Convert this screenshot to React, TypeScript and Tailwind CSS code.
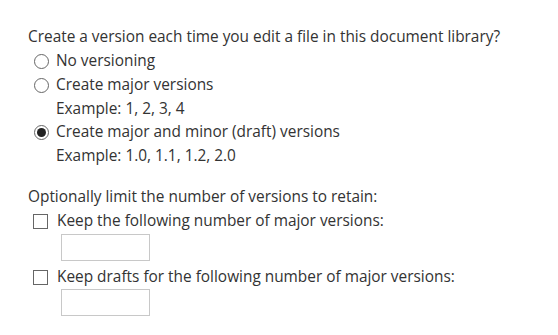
import React from "react";

function Radio({ checked }: { checked?: boolean }) {
  return (
    <span className="flex h-[15px] w-[15px] shrink-0 items-center justify-center rounded-full border border-[#666]">
      {checked && <span className="h-[9px] w-[9px] rounded-full bg-[#222]" />}
    </span>
  );
}

function Check() {
  return <span className="h-[15px] w-[15px] shrink-0 border border-[#666] bg-white" />;
}

export default function App() {
  return (
    <div className="h-[335px] w-[558px] bg-white pl-[28px] pt-[25px] text-[15.4px] text-[#333]" style={{ fontFamily: '"Open Sans", "Noto Sans", sans-serif' }}>
      <div className="h-6 leading-6">Create a version each time you edit a file in this document library?</div>
      <div className="flex h-6 items-center gap-[7px] pl-[6px] leading-6">
        <Radio />
        <span>No versioning</span>
      </div>
      <div className="flex h-6 items-center gap-[7px] pl-[6px] leading-6">
        <Radio />
        <span>Create major versions</span>
      </div>
      <div className="h-[23px] pl-[28px] leading-[23px]">Example: 1, 2, 3, 4</div>
      <div className="flex h-6 items-center gap-[7px] pl-[6px] leading-6">
        <Radio checked />
        <span>Create major and minor (draft) versions</span>
      </div>
      <div className="h-[23px] pl-[28px] leading-[23px]">Example: 1.0, 1.1, 1.2, 2.0</div>

      <div className="mt-[18px] h-6 leading-6">Optionally limit the number of versions to retain:</div>
      <div className="flex h-6 items-center gap-[9px] pl-[5px] leading-6">
        <Check />
        <span>Keep the following number of major versions:</span>
      </div>
      <div className="pl-[33px] pt-[1px]">
        <input className="block h-[27px] w-[89px] border border-[#c8c8c8] bg-white outline-none" />
      </div>
      <div className="mt-[4px] flex h-6 items-center gap-[9px] pl-[5px] leading-6">
        <Check />
        <span>Keep drafts for the following number of major versions:</span>
      </div>
      <div className="pl-[33px]">
        <input className="block h-[27px] w-[89px] border border-[#c8c8c8] bg-white outline-none" />
      </div>
    </div>
  );
}
